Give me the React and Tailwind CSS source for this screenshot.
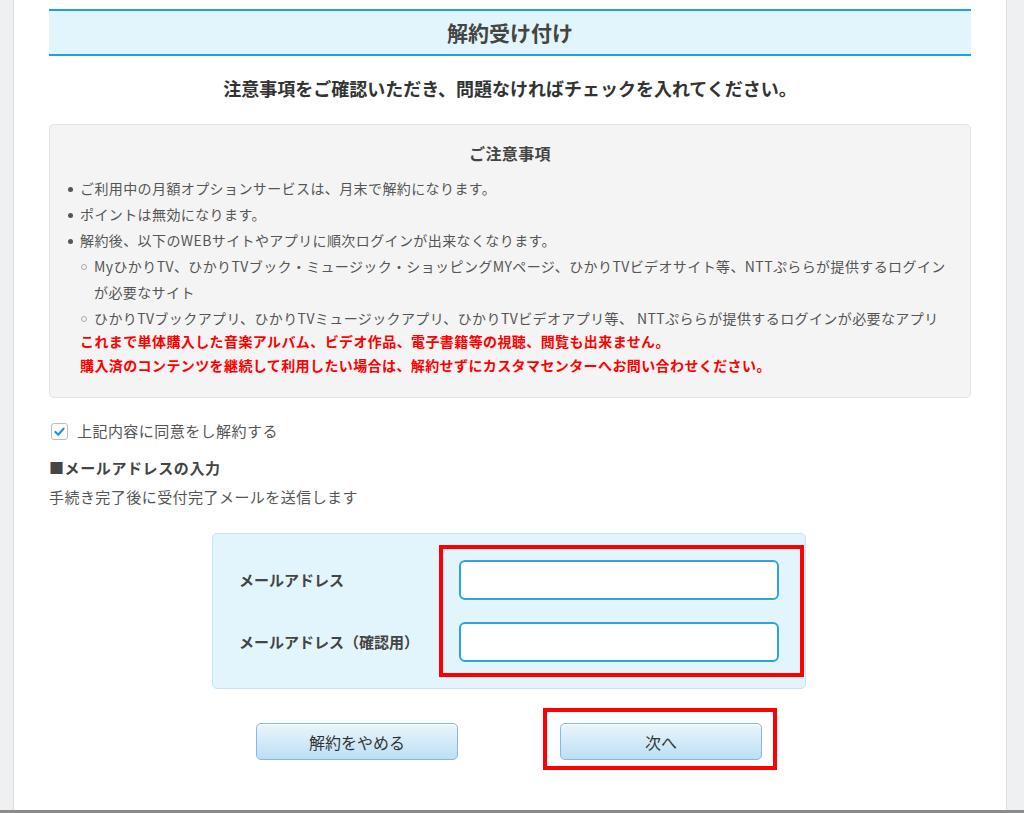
import React from "react";

const FONT = { fontFamily: '"Noto Sans CJK JP", "Noto Sans", sans-serif' };

function CheckBox() {
  return (
    <span className="flex h-[17px] w-[17px] shrink-0 items-center justify-center rounded-[3px] border border-[#b9bdc2] bg-white">
      <svg viewBox="0 0 16 16" className="h-[13px] w-[13px]">
        <path d="M3 8.5 L6.5 12 L13 4.5" fill="none" stroke="#1f8fd6" strokeWidth="2.6" strokeLinecap="round" strokeLinejoin="round" />
      </svg>
    </span>
  );
}

function Bullet({ children, sub = false }) {
  return (
    <li className={sub ? "flex pl-[14px]" : "flex"}>
      <span className="w-[10px] shrink-0 text-center">
        {sub ? (
          <span className="inline-block h-[6px] w-[6px] -translate-y-[2px] rounded-full border border-[#aaa]" />
        ) : (
          <span className="inline-block h-[5px] w-[5px] -translate-y-[2px] rounded-full bg-[#555]" />
        )}
      </span>
      <span className="pl-[5px]">{children}</span>
    </li>
  );
}

function BlueButton({ children }) {
  return (
    <button
      type="button"
      className="flex h-[37px] w-[202px] items-center justify-center rounded-[5px] border border-[#86b9dc] bg-gradient-to-b from-[#eaf5fd] to-[#bcdff5] text-[16px] text-[#333] shadow-[inset_0_1px_0_#fff]"
    >
      {children}
    </button>
  );
}

function EmailInput() {
  return (
    <input
      type="email"
      className="h-[40px] w-full rounded-[6px] border-2 border-[#2ba4e0] bg-white px-2 outline-none"
    />
  );
}

export default function App() {
  return (
    <div style={FONT} className="flex h-[813px] w-[1024px] overflow-hidden border-b-[3px] border-[#8a8a8a] bg-[#eff0f2]">
      <div className="w-[14px] shrink-0 border-r border-[#dcdde1]" />
      <div className="flex-1 bg-white px-[35px] pt-[9px]">
        <div className="flex h-[47px] items-center justify-center border-y-2 border-[#1aa1e6] bg-[#e3f5fc]">
          <h1 className="text-[21px] font-bold text-[#444]">解約受け付け</h1>
        </div>

        <p className="mt-[20px] text-center text-[18px] font-bold leading-[24px] text-[#333]">
          注意事項をご確認いただき、問題なければチェックを入れてください。
        </p>

        <div className="mt-[24px] rounded-[5px] border border-[#e2e2e2] bg-[#f4f4f4] px-[15px] pb-[20px] pt-[16px] tracking-[0.025em]">
          <h2 className="text-center text-[16px] font-bold leading-[24px] text-[#444]">ご注意事項</h2>
          <ul className="mt-[10px] text-[14px] leading-[26px] text-[#555]">
            <Bullet>ご利用中の月額オプションサービスは、月末で解約になります。</Bullet>
            <Bullet>ポイントは無効になります。</Bullet>
            <Bullet>解約後、以下のWEBサイトやアプリに順次ログインが出来なくなります。</Bullet>
            <Bullet sub>
              <span className="whitespace-nowrap">
                MyひかりTV、ひかりTVブック・ミュージック・ショッピングMYページ、ひかりTVビデオサイト等、NTTぷららが提供するログイン
              </span>
              <br />
              が必要なサイト
            </Bullet>
            <Bullet sub>ひかりTVブックアプリ、ひかりTVミュージックアプリ、ひかりTVビデオアプリ等、 NTTぷららが提供するログインが必要なアプリ</Bullet>
          </ul>
          <div className="-mt-[2px] pl-[15px] text-[14px] font-bold leading-[24px] text-[#ff0000]">
            <p>これまで単体購入した音楽アルバム、ビデオ作品、電子書籍等の視聴、閲覧も出来ません。</p>
            <p>購入済のコンテンツを継続して利用したい場合は、解約せずにカスタマセンターへお問い合わせください。</p>
          </div>
        </div>

        <label className="mt-[22px] flex items-center gap-[9px] pl-[2px] text-[15px] leading-[22px] tracking-[0.03em] text-[#555]">
          <CheckBox />
          上記内容に同意をし解約する
        </label>

        <h3 className="mt-[15px] text-[15px] font-bold leading-[22px] tracking-[0.04em] text-[#444]">■メールアドレスの入力</h3>
        <p className="mt-[7px] text-[15px] leading-[22px] tracking-[0.03em] text-[#555]">手続き完了後に受付完了メールを送信します</p>

        <div className="ml-[163px] mt-[25px] flex w-[594px] rounded-[5px] border border-[#c5e4f2] bg-[#e3f5fc] py-[11px] pl-[26px] pr-[1px]">
          <div className="flex w-[200px] shrink-0 flex-col gap-[22px] py-[15px] text-[15px] font-bold text-[#444]">
            <span className="flex h-[40px] items-center">メールアドレス</span>
            <span className="flex h-[40px] items-center">メールアドレス（確認用）</span>
          </div>
          <div className="flex flex-1 flex-col gap-[22px] border-4 border-[#ff0000] py-[11px] pl-[16px] pr-[21px]">
            <EmailInput />
            <EmailInput />
          </div>
        </div>

        <div className="mt-[19px] flex items-start gap-[85px] pl-[207px]">
          <div className="pt-[15px]">
            <BlueButton>解約をやめる</BlueButton>
          </div>
          <div className="border-4 border-[#ff0000] pb-[6px] pl-[13px] pr-[11px] pt-[11px]">
            <BlueButton>次へ</BlueButton>
          </div>
        </div>
      </div>
      <div className="w-[18px] shrink-0 border-l border-[#dcdde1]" />
    </div>
  );
}
